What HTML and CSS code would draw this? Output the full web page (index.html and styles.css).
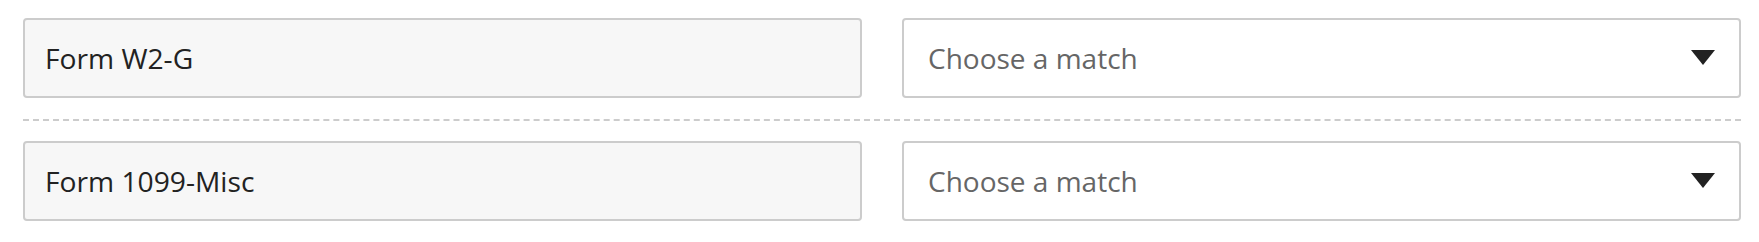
FILE: index.html
```html
<!DOCTYPE html>
<html>
<head>
<meta charset="utf-8">
<link rel="stylesheet" href="styles.css">
</head>
<body>
<div class="matcher">
  <div class="row">
    <div class="field source">Form W2-G</div>
    <div class="field select">
      <span class="placeholder">Choose a match</span>
      <svg class="caret" width="24" height="15" viewBox="0 0 24 15"><path d="M0 0H24L12 15Z" fill="#222"/></svg>
    </div>
  </div>
  <div class="divider"></div>
  <div class="row">
    <div class="field source">Form 1099-Misc</div>
    <div class="field select">
      <span class="placeholder">Choose a match</span>
      <svg class="caret" width="24" height="15" viewBox="0 0 24 15"><path d="M0 0H24L12 15Z" fill="#222"/></svg>
    </div>
  </div>
</div>
</body>
</html>
```
FILE: styles.css
```css
html, body {
  margin: 0;
  padding: 0;
  background: #fff;
}
.matcher {
  padding: 18px 18px 21px 23px;
  font-family: "Open Sans", "Noto Sans", sans-serif;
}
.row {
  display: grid;
  grid-template-columns: 1fr 1fr;
  column-gap: 40px;
}
.field {
  box-sizing: border-box;
  height: 80px;
  border: 2px solid #cccccc;
  border-radius: 4px;
  display: flex;
  align-items: center;
  font-size: 28px;
}
.source {
  background: #f7f7f7;
  color: #222222;
  padding: 0 20px;
  font-size: 28.2px;
}
.select {
  background: #ffffff;
  padding: 0 24px 0 24px;
  justify-content: space-between;
}
.placeholder {
  color: #666666;
}
.caret {
  display: block;
  flex: none;
  margin-top: -1px;
}
.divider {
  border-top: 2px dashed #cccccc;
  margin: 21px 0 20px;
}
```
